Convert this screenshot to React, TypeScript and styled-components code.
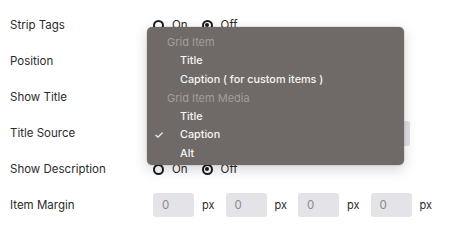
import React from "react";
import styled, { createGlobalStyle } from "styled-components";

const GlobalStyle = createGlobalStyle`
  body {
    margin: 0;
    background: #ffffff;
    font-family: Inter, "Open Sans", "Liberation Sans", sans-serif;
  }
`;

type MenuEntry =
  | { kind: "group"; label: string }
  | { kind: "option"; label: string; checked?: boolean };

const menuEntries: MenuEntry[] = [
  { kind: "group", label: "Grid Item" },
  { kind: "option", label: "Title" },
  { kind: "option", label: "Caption ( for custom items )" },
  { kind: "group", label: "Grid Item Media" },
  { kind: "option", label: "Title" },
  { kind: "option", label: "Caption", checked: true },
  { kind: "option", label: "Alt" },
];

export default function App() {
  return (
    <>
      <GlobalStyle />
      <Form>
        <Row>
          <Label>{"Strip Tags"}</Label>
          <RadioGroup value="off" />
        </Row>
        <Row>
          <Label>{"Position"}</Label>
        </Row>
        <Row>
          <Label>{"Show Title"}</Label>
        </Row>
        <Row>
          <Label>{"Title Source"}</Label>
          <Select />
        </Row>
        <Row>
          <Label>{"Show Description"}</Label>
          <RadioGroup value="off" />
        </Row>
        <Row>
          <Label>{"Item Margin"}</Label>
          <MarginFields>
            {[0, 1, 2, 3].map((i) => (
              <MarginField key={i}>
                <NumberBox>{"0"}</NumberBox>
                <Unit>{"px"}</Unit>
              </MarginField>
            ))}
          </MarginFields>
        </Row>
        <Menu>
          {menuEntries.map((entry, i) =>
            entry.kind === "group" ? (
              <GroupLabel key={i}>{entry.label}</GroupLabel>
            ) : (
              <Option key={i}>
                <Check>{entry.checked ? "✓" : ""}</Check>
                {entry.label}
              </Option>
            )
          )}
        </Menu>
      </Form>
    </>
  );
}

function RadioGroup({ value }: { value: "on" | "off" }) {
  return (
    <Radios>
      <RadioItem>
        <RadioDot $checked={value === "on"} />
        {"On"}
      </RadioItem>
      <RadioItem>
        <RadioDot $checked={value === "off"} />
        {"Off"}
      </RadioItem>
    </Radios>
  );
}

const Form = styled.div`
  position: relative;
  padding: 7px 0 0 10px;
  width: 474px;
  box-sizing: border-box;
`;

const Row = styled.div`
  display: flex;
  align-items: center;
  height: 36px;
`;

const Label = styled.div`
  width: 143px;
  flex-shrink: 0;
  font-size: 11.5px;
  color: #2b2b2b;
`;

const Radios = styled.div`
  display: flex;
  align-items: center;
  gap: 14px;
`;

const RadioItem = styled.label`
  display: flex;
  align-items: center;
  gap: 8px;
  font-size: 11.5px;
  color: #2b2b2b;
`;

const RadioDot = styled.span<{ $checked: boolean }>`
  width: 11px;
  height: 11px;
  box-sizing: border-box;
  border-radius: 50%;
  border: 2px solid #1c1c1c;
  display: inline-flex;
  align-items: center;
  justify-content: center;

  &::after {
    content: "";
    width: 4px;
    height: 4px;
    border-radius: 50%;
    background: ${(p) => (p.$checked ? "#1c1c1c" : "transparent")};
  }
`;

const Select = styled.div`
  width: 257px;
  height: 25px;
  border-radius: 3px;
  background: #e2e1e7;
`;

const MarginFields = styled.div`
  display: flex;
  align-items: center;
  gap: 11px;
`;

const MarginField = styled.div`
  display: flex;
  align-items: center;
  gap: 8px;
`;

const NumberBox = styled.div`
  width: 41px;
  height: 24px;
  box-sizing: border-box;
  padding-left: 9px;
  display: flex;
  align-items: center;
  border-radius: 3px;
  background: #e4e3e8;
  font-size: 11.5px;
  color: #8a8a8e;
`;

const Unit = styled.span`
  font-size: 11px;
  color: #2b2b2b;
`;

const Menu = styled.div`
  position: absolute;
  left: 147px;
  top: 27px;
  width: 257px;
  height: 138px;
  box-sizing: border-box;
  padding: 6px 0 5px;
  border-radius: 5px;
  background: #6f6a67;
  box-shadow: 0 4px 14px rgba(0, 0, 0, 0.18), 0 0 0 0.5px rgba(0, 0, 0, 0.15);
`;

const GroupLabel = styled.div`
  height: 18.5px;
  line-height: 18.5px;
  padding-left: 20px;
  font-size: 11px;
  color: #a39d9a;
`;

const Option = styled.div`
  display: flex;
  align-items: center;
  height: 18.5px;
  font-size: 10.8px;
  font-weight: 500;
  color: #f6f4f2;
`;

const Check = styled.span`
  width: 33px;
  padding-left: 7px;
  box-sizing: border-box;
  font-size: 11px;
`;
